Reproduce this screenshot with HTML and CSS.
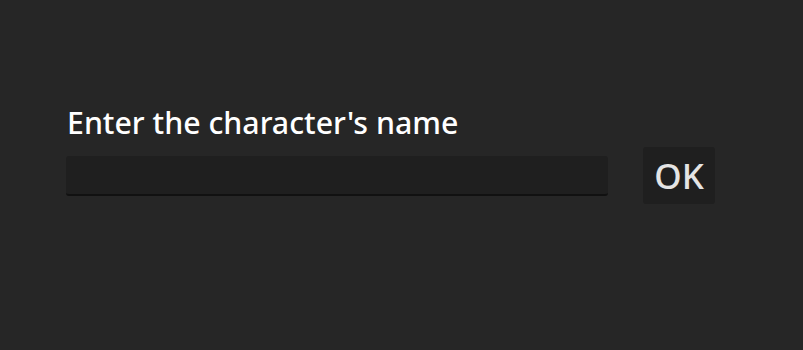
FILE: index.html
```html
<!DOCTYPE html>
<html>
<head>
<meta charset="utf-8">
<link rel="stylesheet" href="styles.css">
</head>
<body>
<div class="dialog">
  <div class="field">
    <label class="label" for="name">Enter the character's name</label>
    <input class="input" id="name" type="text">
  </div>
  <button class="ok">OK</button>
</div>
</body>
</html>
```
FILE: styles.css
```css
html, body {
  margin: 0;
  padding: 0;
  background: #262626;
  width: 803px;
  height: 350px;
  overflow: hidden;
}
.dialog {
  display: flex;
  align-items: flex-end;
  padding: 105px 0 0 66px;
  gap: 35px;
  font-family: "Noto Sans", "Open Sans", sans-serif;
}
.field {
  display: flex;
  flex-direction: column;
  gap: 15px;
  margin-bottom: 8px;
}
.label {
  color: #ffffff;
  font-size: 30.3px;
  line-height: 36px;
  font-weight: 500;
  padding-left: 1px;
}
.input {
  width: 542px;
  height: 40px;
  box-sizing: border-box;
  background: #1f1f1f;
  border: none;
  border-bottom: 2px solid #111111;
  border-radius: 3px;
  outline: none;
  margin: 0;
  padding: 0 8px;
}
.ok {
  width: 72px;
  height: 57px;
  background: #1f1f1f;
  border: none;
  border-radius: 3px;
  color: #e4e4e4;
  font-family: "Noto Sans", "Open Sans", sans-serif;
  font-size: 35px;
  font-weight: 500;
  padding: 0;
  margin: 0;
}
```
